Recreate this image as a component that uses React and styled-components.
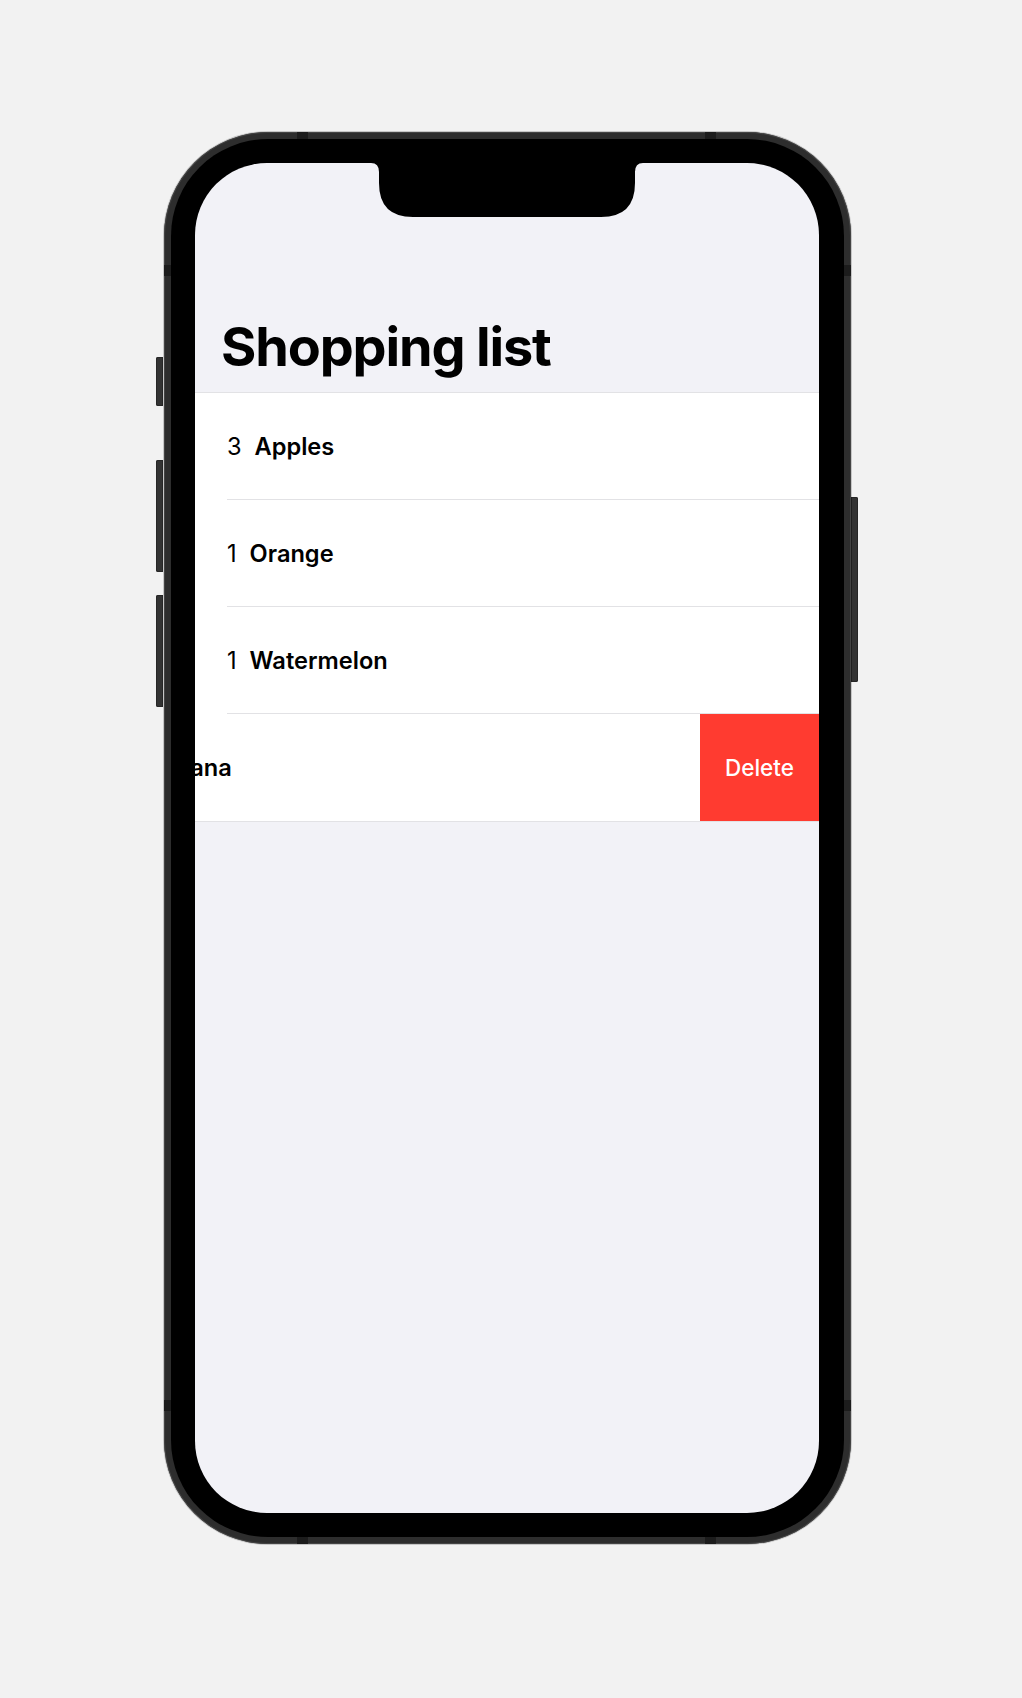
import React from "react";
import styled, { createGlobalStyle } from "styled-components";

const GlobalStyle = createGlobalStyle`
  html, body {
    margin: 0;
    padding: 0;
    background: #f2f2f2;
  }
  body {
    font-family: Inter, "Noto Sans", "Liberation Sans", sans-serif;
    -webkit-font-smoothing: antialiased;
  }
`;

const items = [
  { qty: 3, name: "Apples" },
  { qty: 1, name: "Orange" },
  { qty: 1, name: "Watermelon" },
  { qty: 1, name: "Banana", swiped: true },
];

const Stage = styled.div`
  width: 1022px;
  height: 1698px;
  padding: 132px 0 0 164px;
  box-sizing: border-box;
`;

const PhoneWrap = styled.div`
  position: relative;
  width: 687px;
`;

const Phone = styled.div`
  position: relative;
  padding: 7px;
  border-radius: 104px;
  background: #2d2d2d;
  box-shadow: 0 0 0 1px rgba(0, 0, 0, 0.18), inset 0 0 0 1px #444;
`;

const Bezel = styled.div`
  padding: 24px;
  border-radius: 97px;
  background: #000;
`;

const Screen = styled.div`
  position: relative;
  width: 624px;
  height: 1350px;
  border-radius: 72px;
  overflow: hidden;
  background: #f2f2f7;
`;

const Notch = styled.svg`
  position: absolute;
  top: 0;
  left: 176px;
  width: 272px;
  height: 54px;
`;

const SideButton = styled.div`
  position: absolute;
  width: 7px;
  top: ${(p) => p.top}px;
  height: ${(p) => p.h}px;
  ${(p) => (p.right ? "right: -7px;" : "left: -8px;")}
  background: #333;
  border-radius: ${(p) => (p.right ? "0 2px 2px 0" : "2px 0 0 2px")};
  box-shadow: inset 0 0 0 1px #262626;
`;

const Band = styled.div`
  position: absolute;
  background: #1c1c1c;
  ${(p) =>
    p.vertical
      ? `width: 7px; height: 11px; top: ${p.top}px; ${p.edge}: 0;`
      : `height: 7px; width: 11px; left: ${p.left}px; ${p.edge}: 0;`}
`;

const Header = styled.header`
  height: 229px;
  display: flex;
  align-items: flex-end;
  padding: 0 0 13px 26px;
  box-sizing: border-box;
`;

const Title = styled.h1`
  margin: 0;
  font-size: 54px;
  line-height: 64px;
  font-weight: 700;
  letter-spacing: -1.15px;
  color: #000;
`;

const List = styled.ul`
  margin: 0;
  padding: 0;
  list-style: none;
  background: #fff;
  border-top: 1px solid #e2e2e5;
  border-bottom: 1px solid #e2e2e5;
`;

const Row = styled.li`
  position: relative;
  display: flex;
  height: 107px;
  padding-left: 32px;
  overflow: hidden;
`;

const RowBody = styled.div`
  flex: 1;
  display: flex;
  align-items: center;
  gap: 13px;
  border-bottom: ${(p) => (p.last ? "none" : "1px solid #e2e2e5")};
  transform: translateX(${(p) => (p.shift ? -p.shift : 0)}px);
  font-size: 23.6px;
  color: #000;
`;

const Qty = styled.span`
  font-weight: 400;
`;

const Name = styled.span`
  font-weight: 600;
`;

const DeleteAction = styled.button`
  width: 119px;
  flex: none;
  border: none;
  margin: 0;
  padding: 0;
  background: #ff3b30;
  color: #fff;
  font-family: inherit;
  font-size: 22.5px;
  font-weight: 500;
`;

export default function App() {
  return (
    <>
      <GlobalStyle />
      <Stage>
        <PhoneWrap>
          <SideButton top={225} h={49} />
          <SideButton top={328} h={112} />
          <SideButton top={463} h={112} />
          <SideButton right top={365} h={185} />
          <Phone>
            <Band left={133} edge="top" />
            <Band left={541} edge="top" />
            <Band left={133} edge="bottom" />
            <Band left={541} edge="bottom" />
            <Band vertical top={133} edge="left" />
            <Band vertical top={133} edge="right" />
            <Band vertical top={1268} edge="left" />
            <Band vertical top={1268} edge="right" />
            <Bezel>
              <Screen>
                <Notch viewBox="0 0 272 54">
                  <path
                    d="M0 0 H272 Q264 0 264 9 V20 Q264 54 230 54 H42 Q8 54 8 20 V9 Q8 0 0 0 Z"
                    fill="#000"
                  />
                </Notch>
                <Header>
                  <Title>Shopping list</Title>
                </Header>
                <List>
                  {items.map((it, i) => (
                    <Row key={it.name}>
                      <RowBody
                        last={i === items.length - 1}
                        shift={it.swiped ? 103 : 0}
                      >
                        <Qty>{it.qty}</Qty>
                        <Name>{it.name}</Name>
                      </RowBody>
                      {it.swiped && <DeleteAction>Delete</DeleteAction>}
                    </Row>
                  ))}
                </List>
              </Screen>
            </Bezel>
          </Phone>
        </PhoneWrap>
      </Stage>
    </>
  );
}
